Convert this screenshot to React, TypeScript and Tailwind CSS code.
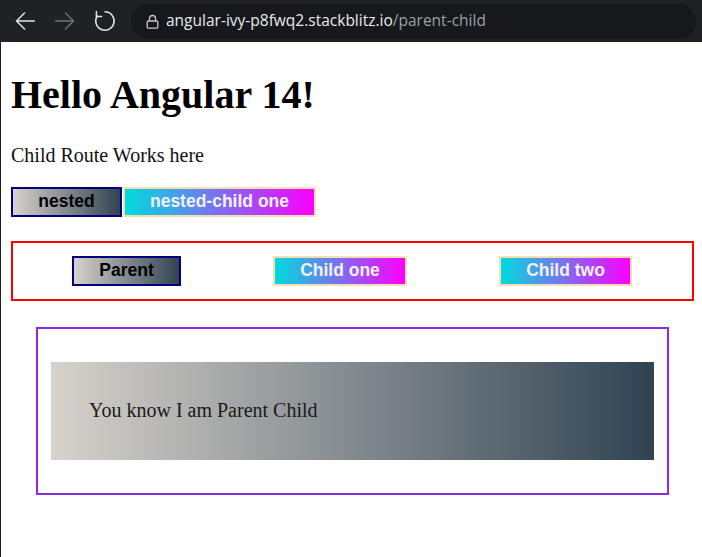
import React from "react";

const serif = { fontFamily: '"Liberation Serif", "Times New Roman", serif' };

function TopBar() {
  return (
    <div className="flex h-[42px] shrink-0 items-center bg-[#202124]">
      {/* back */}
      <svg width="20" height="20" viewBox="0 0 20 20" className="ml-[15px]" fill="none">
        <path d="M19.5 10H1.5M1.5 10l8-8M1.5 10l8 8" stroke="#e3e3e3" strokeWidth="1.5" strokeLinecap="round" />
      </svg>
      {/* forward */}
      <svg width="20" height="20" viewBox="0 0 20 20" className="ml-[20px]" fill="none">
        <path d="M0.5 10h18M18.5 10l-8-8M18.5 10l-8 8" stroke="#6f7073" strokeWidth="1.5" strokeLinecap="round" />
      </svg>
      {/* reload */}
      <svg width="22" height="22" viewBox="0 0 22 22" className="ml-[19px]" fill="none">
        <path d="M11 1.8A9.2 9.2 0 1 1 3.2 6" stroke="#e3e3e3" strokeWidth="1.5" strokeLinecap="round" />
        <path d="M2.4 1.4v5.2h5.2" stroke="#e3e3e3" strokeWidth="1.5" strokeLinecap="round" strokeLinejoin="round" />
      </svg>
      <div className="ml-[15px] mr-[6px] flex h-[35px] flex-1 items-center rounded-full bg-[#17181b] pl-[15px]">
        <svg width="13" height="15" viewBox="0 0 13 15" fill="none">
          <path d="M3.5 7V4.5a3 3 0 0 1 6 0V7" stroke="#c7c7c7" strokeWidth="1.3" />
          <rect x="1.2" y="7" width="10.6" height="7.2" rx="1.3" stroke="#c7c7c7" strokeWidth="1.3" />
        </svg>
        <span
          className="ml-[7px] text-[15.5px] leading-none"
          style={{ fontFamily: '"Open Sans", "Noto Sans", sans-serif' }}
        >
          <span className="text-[#e8eaed]">angular-ivy-p8fwq2.stackblitz.io</span>
          <span className="text-[#9aa0a6]">/parent-child</span>
        </span>
      </div>
    </div>
  );
}

function Btn({ label, kind, w }: { label: string; kind: "grey" | "pink"; w: string }) {
  const base =
    "flex h-[30px] items-center justify-center border-2 text-[17.5px] font-bold leading-none " + w;
  const look =
    kind === "grey"
      ? " border-[#000080] bg-[linear-gradient(to_right,#d7d2cc,#304352)] text-black"
      : " border-[#f5deb3] bg-[linear-gradient(to_right,#00dbde,#fc00ff)] text-[#f2f2fa]";
  return (
    <div className={base + look} style={{ fontFamily: '"Liberation Sans", Arial, sans-serif' }}>
      {label}
    </div>
  );
}

export default function App() {
  return (
    <div className="flex h-[557px] w-[702px] flex-col overflow-hidden bg-white">
      <TopBar />
      <div className="flex-1 border-l border-[#202124] pl-[10px]" style={serif}>
        <div className="w-[683px]">
          <h1 className="mt-[30px] text-[40px] font-bold leading-[46px] text-black">Hello Angular 14!</h1>

          <p className="mt-[26px] text-[20px] leading-[23px] text-[#111]">Child Route Works here</p>

          <div className="mt-[20px] flex gap-[1px]">
            <Btn label="nested" kind="grey" w="w-[111px]" />
            <Btn label="nested-child one" kind="pink" w="w-[193px]" />
          </div>

          <div className="mt-[24px] flex h-[60px] items-center gap-[92px] border-2 border-[#ff0000] pl-[59px]">
            <Btn label="Parent" kind="grey" w="w-[109px]" />
            <Btn label="Child one" kind="pink" w="w-[134px]" />
            <Btn label="Child two" kind="pink" w="w-[133px]" />
          </div>

          <div className="mx-[25px] mt-[26px] border-2 border-[#8a2be2] px-[13px] py-[33px]">
            <div className="bg-[linear-gradient(to_right,#d7d2cc,#304352)] pb-[38px] pl-[38px] pt-[37px]">
              <p className="text-[20px] leading-[23px] text-[#1a1a1a]">You know I am Parent Child</p>
            </div>
          </div>
        </div>
      </div>
    </div>
  );
}
